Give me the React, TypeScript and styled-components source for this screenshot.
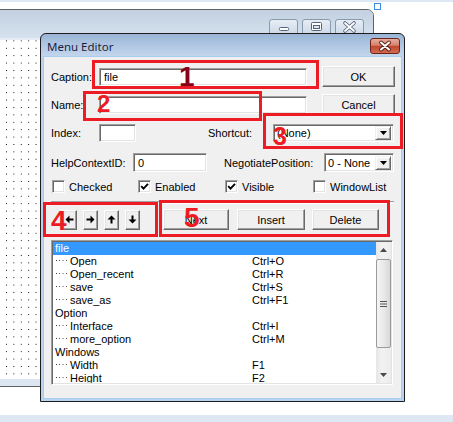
import React from 'react'
import styled, { createGlobalStyle } from 'styled-components'

const GlobalStyle = createGlobalStyle`
  html, body {
    margin: 0;
    padding: 0;
    background: #fff;
  }
  body {
    font-family: 'Liberation Sans', Arial, sans-serif;
    font-size: 11px;
    color: #000;
  }
`

const Screen = styled.div`
  width: 453px;
  height: 422px;
  display: flex;
  flex-direction: column;
  overflow: hidden;
  background: #fff;
`

const Strip = styled.div<{ $h: number }>`
  flex: none;
  height: ${(p) => p.$h}px;
  background: #dde8f4;
`

const Stage = styled.div`
  position: relative;
  flex: 1;
`

const Handle = styled.div`
  position: absolute;
  left: 374px;
  top: 1px;
  width: 5px;
  height: 5px;
  border: 1px solid #3a8ee6;
  background: #fff;
`

/* form designer window behind the dialog */
const BgWindow = styled.div`
  position: absolute;
  left: -9px;
  top: 7px;
  width: 383px;
  height: 378px;
  box-sizing: border-box;
  border: 1px solid #5f6368;
  border-radius: 7px 7px 0 0;
  display: flex;
  flex-direction: column;
  background: #dbe6f2;
  overflow: hidden;
`

const BgTitle = styled.div`
  flex: none;
  height: 28px;
  display: flex;
  background: linear-gradient(to bottom, #c2d0e0, #d6e2ef);
`

const CaptionButtons = styled.div`
  display: flex;
  gap: 4px;
  margin: 9px 9px 0 auto;
`

const CaptionButton = styled.div`
  width: 29px;
  height: 17px;
  box-sizing: border-box;
  border: 1px solid #8a9aad;
  border-radius: 3px;
  background: linear-gradient(to bottom, #e6edf5, #ccd8e6);
  display: flex;
`

const BgEdge = styled.div`
  flex: none;
  height: 2px;
  margin-left: 8px;
  background: #e6edf5;
`

const Canvas = styled.div`
  flex: 1;
  margin-left: 8px;
  background: #fff;
  overflow: hidden;
`

const BgBottom = styled.div`
  flex: none;
  height: 7px;
  background: #dbe6f2;
`

/* Menu Editor dialog */
const Dialog = styled.div`
  position: absolute;
  left: 40px;
  top: 31px;
  width: 365px;
  height: 369px;
  box-sizing: border-box;
  border: 1px solid #1c1c1c;
  border-radius: 6px 6px 0 0;
  padding: 0 3px 3px;
  display: flex;
  flex-direction: column;
  background: linear-gradient(to bottom, #9ab5d6 0px, #b5cbe5 14px, #c3d6ed 23px, #bad4ef 24px);
`

const TitleBar = styled.div`
  flex: none;
  height: 23px;
  display: flex;
  align-items: center;
  padding-left: 3px;
`

const TitleText = styled.span`
  font-family: 'Noto Sans', 'Open Sans', sans-serif;
  font-size: 11.5px;
  color: #1d1e3c;
  margin-top: 1px;
`

const CloseButton = styled.div`
  align-self: flex-start;
  margin: 4px 1px 0 auto;
  width: 30px;
  height: 16px;
  box-sizing: border-box;
  border: 1px solid #6e2519;
  border-radius: 3px;
  background: linear-gradient(to bottom, #e6ad9e 0%, #d6806a 45%, #c2472f 52%, #d26a52 100%);
  display: flex;
`

const Client = styled.div`
  flex: 1;
  background: #f0f0f0;
  box-shadow: 0 0 0 1px #a5cdee;
  padding: 9px 0 0 7px;
  display: flex;
  flex-direction: column;
`

const TopRow = styled.div<{ $mt: number; $h: number }>`
  display: grid;
  grid-template-columns: 48px 208px 88px;
  align-items: center;
  margin-top: ${(p) => p.$mt}px;
  height: ${(p) => p.$h}px;
`

const Row = styled.div<{ $mt: number; $h: number }>`
  display: flex;
  align-items: center;
  margin-top: ${(p) => p.$mt}px;
  height: ${(p) => p.$h}px;
`

const Label = styled.span<{ $w?: number; $ml?: number }>`
  flex: none;
  width: ${(p) => (p.$w ? `${p.$w}px` : 'auto')};
  margin-left: ${(p) => p.$ml || 0}px;
  white-space: nowrap;
`

const TextBox = styled.div<{ $w?: number; $h: number }>`
  flex: none;
  box-sizing: border-box;
  width: ${(p) => (p.$w ? `${p.$w}px` : 'auto')};
  height: ${(p) => p.$h}px;
  background: #fff;
  border: 1px solid;
  border-color: #a0a0a0 #fff #fff #a0a0a0;
  box-shadow: inset 1px 1px #696969, inset -1px -1px #e3e3e3;
  padding: 0 0 0 4px;
  display: flex;
  align-items: center;
`

const Combo = styled(TextBox)`
  padding: 0 2px 0 3px;
  justify-content: space-between;
`

const ComboArrow = styled.div`
  width: 16px;
  height: 14px;
  box-sizing: border-box;
  background: #f0f0f0;
  border: 1px solid;
  border-color: #f0f0f0 #696969 #696969 #f0f0f0;
  box-shadow: inset 1px 1px #fff, inset -1px -1px #a0a0a0;
  display: flex;
  align-items: center;
  justify-content: center;
`

const Button = styled.div<{ $w?: number; $h: number; $ml?: number }>`
  flex: none;
  justify-self: end;
  box-sizing: border-box;
  width: ${(p) => (p.$w ? `${p.$w}px` : 'auto')};
  height: ${(p) => p.$h}px;
  margin-left: ${(p) => p.$ml || 0}px;
  background: #f0f0f0;
  border: 1px solid;
  border-color: #fff #696969 #696969 #fff;
  box-shadow: inset -1px -1px #a0a0a0, inset 1px 1px #e3e3e3;
  display: flex;
  align-items: center;
  justify-content: center;
`

const CheckItem = styled.label<{ $w?: number }>`
  flex: none;
  width: ${(p) => (p.$w ? `${p.$w}px` : 'auto')};
  display: flex;
  align-items: center;
  gap: 4px;
`

const CheckBox = styled.span`
  flex: none;
  width: 13px;
  height: 13px;
  box-sizing: border-box;
  background: #fff;
  border: 1px solid;
  border-color: #a0a0a0 #fff #fff #a0a0a0;
  box-shadow: inset 1px 1px #696969, inset -1px -1px #e3e3e3;
  display: flex;
  align-items: center;
  justify-content: center;
`

const Separator = styled.div`
  margin: 8px 7px 0 0;
  height: 1px;
  border-top: 1px solid #a0a0a0;
  border-bottom: 1px solid #fff;
`

const ArrowGroup = styled.div`
  display: flex;
  gap: 6px;
  margin-left: 11px;
`

const ListBox = styled.div`
  margin-top: 10px;
  width: 342px;
  height: 145px;
  box-sizing: border-box;
  background: #fff;
  border: 1px solid;
  border-color: #a0a0a0 #fff #fff #a0a0a0;
  box-shadow: inset 1px 1px #696969, inset -1px -1px #e3e3e3;
  padding: 1px;
  display: flex;
`

const Rows = styled.div`
  flex: 1;
  overflow: hidden;
`

const ListRow = styled.div<{ $selected?: boolean }>`
  display: grid;
  grid-template-columns: 197px 1fr;
  height: 13px;
  line-height: 13px;
  padding-left: 2px;
  background: ${(p) => (p.$selected ? '#3399ff' : 'transparent')};
  color: ${(p) => (p.$selected ? '#fff' : '#000')};
  white-space: nowrap;
`

const Indent = styled.span`
  display: inline-block;
  width: 15px;
  height: 13px;
  vertical-align: top;
  background-image: linear-gradient(to right, #2e2414 1px, transparent 1px);
  background-size: 3.3px 1px;
  background-repeat: repeat-x;
  background-position: 1px 5px;
  clip-path: inset(0 3px 0 0);
`

const ScrollBar = styled.div`
  flex: none;
  width: 15px;
  display: flex;
  flex-direction: column;
  background: linear-gradient(to right, #e6e6e6, #f2f2f2 40%, #ececec);
`

const ScrollArrow = styled.div`
  flex: none;
  height: 16px;
  display: flex;
  align-items: center;
  justify-content: center;
`

const Thumb = styled.div`
  flex: none;
  margin-top: 1px;
  height: 89px;
  box-sizing: border-box;
  border: 1px solid #9a9a9a;
  border-radius: 2px;
  background: linear-gradient(to right, #f4f4f4, #e9e9e9 50%, #d8d8d8);
  display: flex;
  align-items: center;
  justify-content: center;
`

const Track = styled.div`
  flex: 1;
`

const AnnotBox = styled.div<{ $x: number; $y: number; $w: number; $h: number }>`
  position: absolute;
  left: ${(p) => p.$x}px;
  top: ${(p) => p.$y}px;
  width: ${(p) => p.$w}px;
  height: ${(p) => p.$h}px;
  box-sizing: border-box;
  border: 3px solid #ed1c24;
  pointer-events: none;
`

const AnnotNum = styled.span<{ $x: number; $y: number; $size: number; $color: string }>`
  position: absolute;
  left: ${(p) => p.$x}px;
  top: ${(p) => p.$y}px;
  font-family: 'Liberation Sans', Arial, sans-serif;
  font-weight: bold;
  font-size: ${(p) => p.$size}px;
  line-height: 1;
  color: ${(p) => p.$color};
`

const menuItems = [
  { label: 'file', level: 0, key: '' },
  { label: 'Open', level: 1, key: 'Ctrl+O' },
  { label: 'Open_recent', level: 1, key: 'Ctrl+R' },
  { label: 'save', level: 1, key: 'Ctrl+S' },
  { label: 'save_as', level: 1, key: 'Ctrl+F1' },
  { label: 'Option', level: 0, key: '' },
  { label: 'Interface', level: 1, key: 'Ctrl+I' },
  { label: 'more_option', level: 1, key: 'Ctrl+M' },
  { label: 'Windows', level: 0, key: '' },
  { label: 'Width', level: 1, key: 'F1' },
  { label: 'Height', level: 1, key: 'F2' },
]

const annotations = [
  { n: '1', box: [92, 58, 227, 29], num: [179, 61, 28], color: '#880015' },
  { n: '2', box: [83, 89, 179, 30], num: [97, 90, 24], color: '#ed1c24' },
  { n: '3', box: [263, 111, 140, 36], num: [273, 122, 25], color: '#ed1c24' },
  { n: '4', box: [43, 200, 115, 35], num: [51, 205, 28], color: '#ed1c24' },
  { n: '5', box: [159, 198, 231, 37], num: [184, 202, 28], color: '#ed1c24' },
]

function DropArrow() {
  return (
    <svg width="7" height="4" viewBox="0 0 7 4">
      <polygon points="0,0 7,0 3.5,4" fill="#000" />
    </svg>
  )
}

function Check() {
  return (
    <svg width="9" height="9" viewBox="0 0 9 9">
      <polyline points="1.2,4.2 3.5,6.6 8,1.8" fill="none" stroke="#000" strokeWidth="1.9" />
    </svg>
  )
}

function MoveArrow({ rotate }: { rotate: number }) {
  return (
    <svg width="9" height="9" viewBox="0 0 9 9" style={{ transform: `rotate(${rotate}deg)` }}>
      <path d="M0.5 3.5H4.5V0.5L8.5 4.5L4.5 8.5V5.5H0.5Z" fill="#000" />
    </svg>
  )
}

function DotGrid() {
  return (
    <svg width="100%" height="100%">
      <defs>
        <pattern id="dots" x="6" y="22.6" width="7.4" height="7.4" patternUnits="userSpaceOnUse">
          <rect width="1" height="1" fill="#000" shapeRendering="crispEdges" />
        </pattern>
      </defs>
      <rect width="100%" height="100%" fill="url(#dots)" />
    </svg>
  )
}

export default function App() {
  return (
    <>
      <GlobalStyle />
      <Screen>
        <Strip $h={2} />
        <Stage>
          <Handle />
          <BgWindow>
            <BgTitle>
              <CaptionButtons>
                <CaptionButton>
                  <svg width="27" height="15" viewBox="0 0 27 15">
                    <rect x="9.5" y="7.5" width="9" height="3" rx="1" fill="#fff" stroke="#56657a" />
                  </svg>
                </CaptionButton>
                <CaptionButton>
                  <svg width="27" height="15" viewBox="0 0 27 15">
                    <rect x="8.5" y="2.5" width="10" height="8" rx="1" fill="#fff" stroke="#56657a" />
                    <rect x="10.5" y="5.5" width="6" height="3" fill="#dfe6ee" stroke="#56657a" />
                  </svg>
                </CaptionButton>
                <CaptionButton>
                  <svg width="27" height="15" viewBox="0 0 27 15">
                    <path d="M9 3L18 11M18 3L9 11" stroke="#56657a" strokeWidth="3.6" strokeLinecap="round" />
                    <path d="M9 3L18 11M18 3L9 11" stroke="#fff" strokeWidth="1.8" strokeLinecap="round" />
                  </svg>
                </CaptionButton>
              </CaptionButtons>
            </BgTitle>
            <BgEdge />
            <Canvas>
              <DotGrid />
            </Canvas>
            <BgBottom />
          </BgWindow>

          <Dialog>
            <TitleBar>
              <TitleText>Menu Editor</TitleText>
              <CloseButton>
                <svg width="28" height="14" viewBox="0 0 28 14">
                  <path d="M10 3.5L18 10.5M18 3.5L10 10.5" stroke="#5a1d14" strokeWidth="3.8" strokeLinecap="round" />
                  <path d="M10 3.5L18 10.5M18 3.5L10 10.5" stroke="#fff" strokeWidth="2" strokeLinecap="round" />
                </svg>
              </CloseButton>
            </TitleBar>
            <Client>
              <TopRow $mt={0} $h={21}>
                <Label>Caption:</Label>
                <TextBox $h={18}>file</TextBox>
                <Button $w={73} $h={21}>OK</Button>
              </TopRow>
              <TopRow $mt={7} $h={22}>
                <Label>Name:</Label>
                <TextBox $h={18} />
                <Button $w={73} $h={22}>Cancel</Button>
              </TopRow>
              <Row $mt={8} $h={18}>
                <Label $w={48}>Index:</Label>
                <TextBox $w={37} $h={18} />
                <Label $w={65} $ml={72}>Shortcut:</Label>
                <Combo $w={121} $h={18}>
                  (None)
                  <ComboArrow>
                    <DropArrow />
                  </ComboArrow>
                </Combo>
              </Row>
              <Row $mt={11} $h={19}>
                <Label $w={82}>HelpContextID:</Label>
                <TextBox $w={74} $h={19}>0</TextBox>
                <Label $w={100} $ml={17}>NegotiatePosition:</Label>
                <Combo $w={70} $h={19}>
                  0 - None
                  <ComboArrow>
                    <DropArrow />
                  </ComboArrow>
                </Combo>
              </Row>
              <Row $mt={8} $h={13}>
                <span style={{ width: 1 }} />
                <CheckItem $w={86}>
                  <CheckBox />
                  Checked
                </CheckItem>
                <CheckItem $w={87}>
                  <CheckBox>
                    <Check />
                  </CheckBox>
                  Enabled
                </CheckItem>
                <CheckItem $w={88}>
                  <CheckBox>
                    <Check />
                  </CheckBox>
                  Visible
                </CheckItem>
                <CheckItem>
                  <CheckBox />
                  WindowList
                </CheckItem>
              </Row>
              <Separator />
              <Row $mt={5} $h={21}>
                <ArrowGroup>
                  {[180, 0, -90, 90].map((r) => (
                    <Button key={r} $w={15} $h={20}>
                      <MoveArrow rotate={r} />
                    </Button>
                  ))}
                </ArrowGroup>
                <Button $w={66} $h={21} $ml={23}>
                  Next
                </Button>
                <Button $w={68} $h={21} $ml={8}>
                  Insert
                </Button>
                <Button $w={67} $h={21} $ml={7}>
                  Delete
                </Button>
              </Row>
              <ListBox>
                <Rows>
                  {menuItems.map((item, i) => (
                    <ListRow key={item.label} $selected={i === 0}>
                      <span>
                        {item.level > 0 && <Indent />}
                        {item.label}
                      </span>
                      <span>{item.key}</span>
                    </ListRow>
                  ))}
                </Rows>
                <ScrollBar>
                  <ScrollArrow>
                    <svg width="7" height="4" viewBox="0 0 7 4">
                      <polygon points="0,4 3.5,0 7,4" fill="#4a4a4a" />
                    </svg>
                  </ScrollArrow>
                  <Thumb>
                    <svg width="7" height="8" viewBox="0 0 7 8">
                      <path d="M0 1.5H7M0 4H7M0 6.5H7" stroke="#555" strokeWidth="1" />
                    </svg>
                  </Thumb>
                  <Track />
                  <ScrollArrow>
                    <svg width="7" height="4" viewBox="0 0 7 4">
                      <polygon points="0,0 7,0 3.5,4" fill="#4a4a4a" />
                    </svg>
                  </ScrollArrow>
                </ScrollBar>
              </ListBox>
            </Client>
          </Dialog>

          {annotations.map((a) => (
            <React.Fragment key={a.n}>
              <AnnotBox $x={a.box[0]} $y={a.box[1]} $w={a.box[2]} $h={a.box[3]} />
              <AnnotNum $x={a.num[0]} $y={a.num[1]} $size={a.num[2]} $color={a.color}>
                {a.n}
              </AnnotNum>
            </React.Fragment>
          ))}
        </Stage>
        <Strip $h={7} />
      </Screen>
    </>
  )
}
